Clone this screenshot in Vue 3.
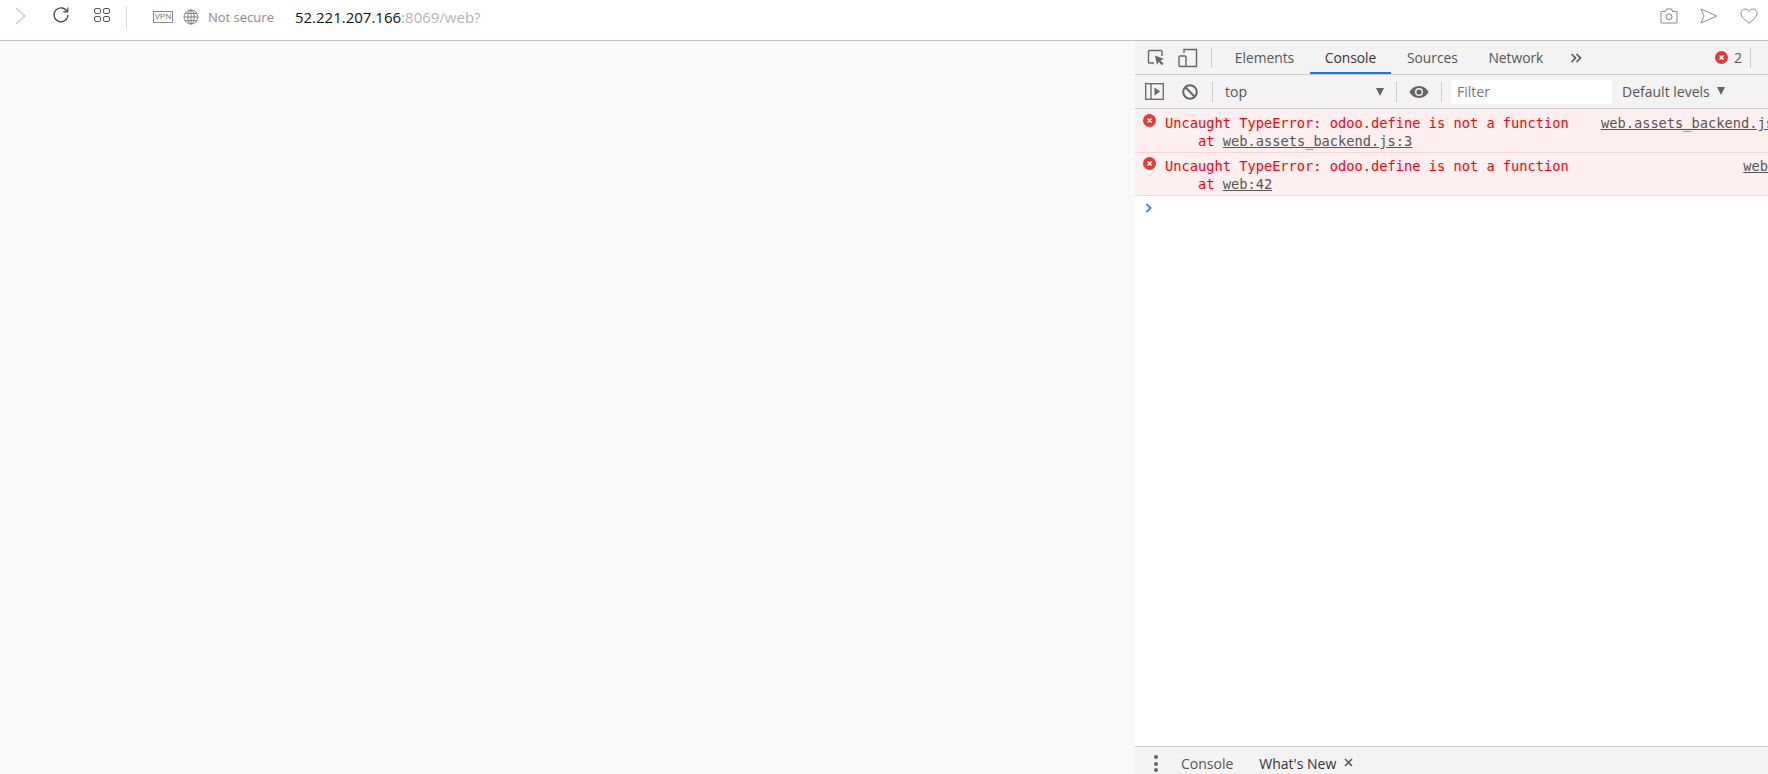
<script setup>
const messages = [
  { source: 'web.assets_backend.js', at: 'web.assets_backend.js:3', wide: true },
  { source: 'web', at: 'web:42', wide: false },
]
</script>

<template>
  <div class="page">
    <header class="browser">
      <svg class="ic fwd" width="14" height="20" viewBox="0 0 14 20"><path d="M2 2l9 8-9 8" fill="none" stroke="#c4c4c4" stroke-width="1.1"/></svg>
      <svg class="ic reload" width="18" height="18" viewBox="0 0 18 18"><path d="M15 5.2A7 7 0 1 0 16 9" fill="none" stroke="#444" stroke-width="1.2"/><path d="M15.8 1.500v4.400h-4.400" fill="none" stroke="#444" stroke-width="1.2"/></svg>
      <svg class="ic grid" width="16" height="16" viewBox="0 0 16 16"><g fill="none" stroke="#555" stroke-width="1"><rect x=".5" y="1.5" width="6" height="5" rx="1.5"/><rect x="9.5" y="1.5" width="6" height="5" rx="1.5"/><rect x=".5" y="9.5" width="6" height="5" rx="1.5"/><rect x="9.5" y="9.5" width="6" height="5" rx="1.5"/></g></svg>
      <span class="vsep"></span>
      <span class="vpn">VPN</span>
      <svg class="ic globe" width="16" height="16" viewBox="0 0 16 16"><g fill="none" stroke="#777" stroke-width=".9"><circle cx="8" cy="8" r="7"/><ellipse cx="8" cy="8" rx="3.2" ry="7"/><path d="M1 8h14M2 4.400h12M2 11.600h12M8 1v14"/></g></svg>
      <span class="secure">Not secure</span>
      <span class="url">52.221.207.166<span class="dim">:8069/web?</span></span>
      <span class="spacer"></span>
      <svg class="ic cam" width="18" height="16" viewBox="0 0 18 16"><g fill="none" stroke="#8a8a8a" stroke-width="1"><path d="M1.500 3.500h4l1-2.500h5l1 2.500h4a.5.5 0 0 1 .5.5v10.500a.5.5 0 0 1-.5.5h-15a.5.5 0 0 1-.5-.5V4a.5.5 0 0 1 .5-.5z"/><circle cx="9" cy="8.800" r="3"/></g></svg>
      <svg class="ic send" width="18" height="16" viewBox="0 0 18 16"><path d="M1 1l16 7-16 7 3-7z" fill="none" stroke="#8a8a8a" stroke-width="1"/></svg>
      <svg class="ic heart" width="18" height="16" viewBox="0 0 18 16"><path d="M9 15.300C5 12 1 9 1 5.200 1 2.800 2.800 1 5 1c1.700 0 3.100.9 4 2.500C9.900 1.900 11.300 1 13 1c2.200 0 4 1.800 4 4.200C17 9 13 12 9 15.300z" fill="none" stroke="#8a8a8a" stroke-width="1"/></svg>
    </header>

    <main class="body">
      <section class="viewport"></section>
      <aside class="devtools">
        <nav class="tabs">
          <svg class="tool inspect" width="18" height="18" viewBox="0 0 18 18"><path d="M7 14H2.500A1 1 0 0 1 1.500 13V2.500a1 1 0 0 1 1-1H14a1 1 0 0 1 1 1V7" fill="none" stroke="#666" stroke-width="1.400"/><path d="M8 6.500l9 3.500-3.600 1.300 3 3.500-1.700 1.500-2.900-3.500L10 16z" fill="#666"/></svg>
          <svg class="tool device" width="20" height="20" viewBox="0 0 20 20"><g fill="none" stroke="#666" stroke-width="1.400"><path d="M6 5V1.500h12.500v17H8"/><rect x="1" y="8" width="7" height="10.500" rx="1"/></g></svg>
          <span class="tsep"></span>
          <span class="tab">Elements</span>
          <span class="tab active">Console</span>
          <span class="tab">Sources</span>
          <span class="tab">Network</span>
          <svg class="more" width="12" height="12" viewBox="0 0 12 12"><path d="M1.500 2l4 4-4 4M6.500 2l4 4-4 4" fill="none" stroke="#555" stroke-width="1.700"/></svg>
          <span class="spacer"></span>
          <svg class="errdot" width="13" height="13" viewBox="0 0 13 13"><circle cx="6.500" cy="6.500" r="6.500" fill="#e53935"/><path d="M4.500 4.500l4 4m0-4l-4 4" stroke="#fff" stroke-width="1.500"/></svg>
          <span class="count">2</span>
          <span class="csep"></span>
        </nav>
        <div class="toolbar">
          <svg class="tool sidebar" width="19" height="17" viewBox="0 0 19 17"><g fill="none" stroke="#666" stroke-width="1.300"><rect x=".7" y=".7" width="17.600" height="15.600"/><path d="M6 .7v15.600"/></g><path d="M9.500 4.500l5.500 4-5.500 4z" fill="#666"/></svg>
          <svg class="tool block" width="16" height="16" viewBox="0 0 16 16"><g fill="none" stroke="#666" stroke-width="2"><circle cx="8" cy="8" r="6.800"/><path d="M3.300 3.300l9.400 9.400"/></g></svg>
          <span class="tsep"></span>
          <span class="context">top</span>
          <span class="caret"></span>
          <span class="tsep"></span>
          <svg class="tool eye" width="20" height="14" viewBox="0 0 20 14"><path d="M10 1C5.500 1 2 3.800.5 7 2 10.200 5.500 13 10 13s8-2.800 9.500-6C18 3.800 14.500 1 10 1z" fill="#666"/><circle cx="10" cy="7" r="4" fill="#f3f3f3"/><circle cx="10" cy="7" r="2.600" fill="#666"/></svg>
          <span class="tsep"></span>
          <span class="filter">Filter</span>
          <span class="levels">Default levels</span>
          <span class="caret small"></span>
        </div>
        <div v-for="m in messages" :key="m.at" class="msg" :class="{ tight: !m.wide }">
          <svg class="msgicon" width="13" height="13" viewBox="0 0 13 13"><circle cx="6.500" cy="6.500" r="6.500" fill="#e53935"/><path d="M4.500 4.500l4 4m0-4l-4 4" stroke="#fff" stroke-width="1.500"/></svg>
          <div class="msgtext">
            <div>Uncaught TypeError: odoo.define is not a function</div>
            <div class="atline">at <u class="link">{{ m.at }}</u></div>
          </div>
          <u class="link source" :class="{ wide: m.wide }">{{ m.source }}</u>
        </div>
        <div class="prompt">
          <svg width="8" height="10" viewBox="0 0 8 10"><path d="M1.500 1l4 4-4 4" fill="none" stroke="#3a7ff0" stroke-width="1.800"/></svg>
        </div>
        <span class="grow"></span>
        <footer class="drawer">
          <span class="dots"><i></i><i></i><i></i></span>
          <span class="dtab">Console</span>
          <span class="dtab cur">What's New</span>
          <svg class="close" width="9" height="9" viewBox="0 0 9 9"><path d="M1 1l7 7m0-7l-7 7" stroke="#555" stroke-width="1.500"/></svg>
        </footer>
      </aside>
    </main>
  </div>
</template>

<style>
html, body { margin: 0; overflow: hidden; }
</style>

<style scoped>
.page { width: 1768px; height: 774px; display: flex; flex-direction: column; overflow: hidden; font-family: "Open Sans", "Noto Sans", sans-serif; background: #fff; }
.browser { display: flex; align-items: center; border-bottom: 1px solid #b9c3cb; flex: none; padding-bottom: 6px; box-sizing: content-box; height: 34px; }
.ic { flex: none; display: block; }
.fwd { margin-left: 14px; margin-top: -2px; }
.reload { margin-left: 24px; margin-top: -4px; }
.grid { margin-left: 24px; margin-top: -4px; }
.vsep { width: 1px; height: 22px; background: #d8d8d8; margin-left: 16px; margin-top: 0; }
.vpn { margin-left: 26px; width: 18px; height: 10px; border: 1px solid #8a8a8a; font: 8px/10px "Liberation Sans", sans-serif; color: #777; text-align: center; }
.globe { margin-left: 10px; }
.secure { margin-left: 9px; font-size: 13px; color: #8c8c8c; }
.url { margin-left: 21px; font-size: 15px; color: #111; }
.dim { color: #b5b5b5; }
.spacer { flex: 1; }
.cam { margin-top: -2px; margin-right: 22px; }
.send { margin-top: -2px; margin-right: 22px; }
.heart { margin-top: -2px; margin-right: 10px; }

.body { flex: 1; display: flex; min-height: 0; }
.viewport { width: 1135px; flex: none; background: #f9f9f9; }
.devtools { flex: 1; display: flex; flex-direction: column; min-width: 0; overflow: hidden; background: #fff; }
.tabs { height: 34px; flex: none; box-sizing: border-box; display: flex; align-items: center; background: #f3f3f3; border-bottom: 1px solid #ccc; }
.tool { flex: none; display: block; }
.inspect { margin-left: 12px; }
.device { margin-left: 13px; }
.tsep { flex: none; width: 1px; height: 20px; background: #ccc; }
.tabs .tsep { margin-left: 13px; }
.tab { height: 33px; line-height: 34px; font-size: 13.800px; color: #555; padding: 0 14.800px; box-sizing: border-box; margin: 0 0 0 1px; }
.tabs .tsep + .tab { margin-left: 8px; }
.tab.active { color: #333; border-bottom: 2px solid #1a73e8; }
.more { margin-left: 12px; }
.errdot { margin-right: 6px; }
.count { font-size: 14px; color: #555; }
.csep { width: 1px; height: 20px; background: #ccc; margin-left: 8px; margin-right: 17px; }
.toolbar { height: 34px; flex: none; box-sizing: border-box; display: flex; align-items: center; background: #f3f3f3; border-bottom: 1px solid #ccc; }
.sidebar { margin-left: 10px; }
.block { margin-left: 18px; }
.toolbar > .block + .tsep { margin-left: 14px; }
.context { width: 151px; margin-left: 12px; font-size: 14px; color: #555; }
.caret { flex: none; width: 0; height: 0; border-left: 4.500px solid transparent; border-right: 4.500px solid transparent; border-top: 8px solid #666; margin-right: 12px; }
.eye { margin-left: 12px; margin-right: 12px; }
.filter { margin-left: 9px; width: 155px; padding-left: 6px; box-sizing: content-box; height: 24px; line-height: 24px; background: #fff; font-size: 14px; color: #777; }
.levels { margin-left: 10px; font-size: 14px; color: #555; }
.caret.small { margin-left: 7px; margin-top: -2px; margin-right: 0; }
.msg { height: 44px; flex: none; box-sizing: border-box; display: flex; background: #fef0f0; border-bottom: 1px solid #fbd5d5; font: 13.700px/18px "DejaVu Sans Mono", "Liberation Mono", monospace; color: #f00; position: relative; padding-top: 5px; }
.msg.tight { height: 43px; padding-top: 4px; }
.msgicon { flex: none; margin: 0 0 0 8px; }
.msgtext { margin-left: 9px; }
.atline { padding-left: 33px; }
.link { color: #555; }
.source { position: absolute; right: 0; top: 5px; white-space: nowrap; }
.tight .source { top: 4px; }
.source.wide { right: -6px; }
.prompt { height: 22px; flex: none; padding: 7px 0 0 10px; box-sizing: border-box; }
.prompt svg { display: block; }
.grow { flex: 1; }
.drawer { height: 28px; flex: none; display: flex; align-items: center; background: #f3f3f3; border-top: 1px solid #ccc; box-sizing: border-box; padding-top: 6px; overflow: hidden; }
.dots { width: 4px; margin-left: 19px; display: flex; flex-direction: column; gap: 2.500px; }
.dots i { width: 4px; height: 4px; border-radius: 50%; background: #666; }
.dtab { font-size: 14px; color: #555; }
.dots + .dtab { margin-left: 23px; }
.dtab.cur { margin-left: 26px; color: #333; }
.close { margin-left: 8px; margin-top: -2px; }
</style>
